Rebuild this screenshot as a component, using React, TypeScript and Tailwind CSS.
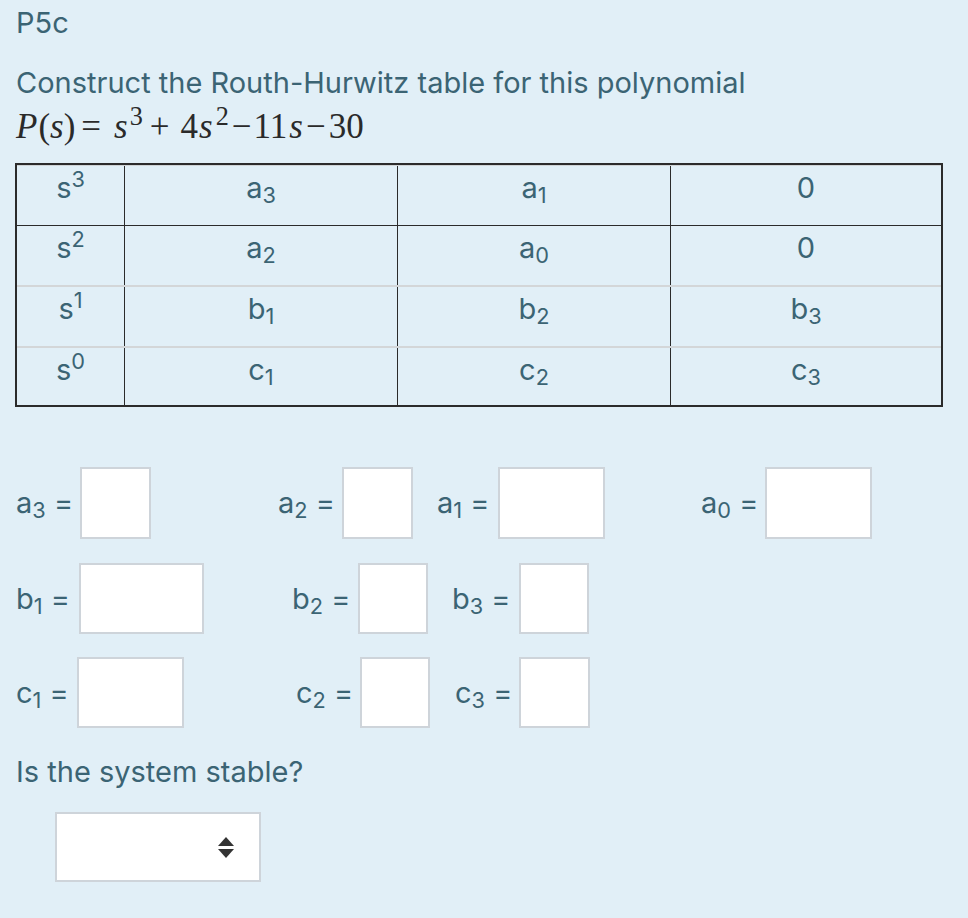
import React from "react";

const FONT = { fontFamily: "Inter, 'Liberation Sans', sans-serif" };

function Sym({ c, n, sup }: { c: string; n: string; sup?: boolean }) {
  return (
    <span>
      {c}
      {sup ? <sup>{n}</sup> : <sub>{n}</sub>}
    </span>
  );
}

type Cell = { c: string; n?: string; sup?: boolean };

const rows: { cells: Cell[]; rowCls: string }[] = [
  {
    rowCls: "h-[60px] border-t border-t-[#cfd3d5]",
    cells: [{ c: "s", n: "3", sup: true }, { c: "a", n: "3" }, { c: "a", n: "1" }, { c: "0" }],
  },
  {
    rowCls: "h-[60px] border-t border-t-[#2b2b2b]",
    cells: [{ c: "s", n: "2", sup: true }, { c: "a", n: "2" }, { c: "a", n: "0" }, { c: "0" }],
  },
  {
    rowCls: "h-[61px] border-t-2 border-t-[#d3d6d8]",
    cells: [{ c: "s", n: "1", sup: true }, { c: "b", n: "1" }, { c: "b", n: "2" }, { c: "b", n: "3" }],
  },
  {
    rowCls: "h-[59px] border-t-2 border-t-[#d3d6d8]",
    cells: [{ c: "s", n: "0", sup: true }, { c: "c", n: "1" }, { c: "c", n: "2" }, { c: "c", n: "3" }],
  },
];

const colCls = [
  "w-[107px]",
  "w-[273px] border-l border-l-[#2b2b2b]",
  "w-[273px] border-l border-l-[#2b2b2b]",
  "w-[271px] border-l border-l-[#2b2b2b]",
];

type Field = { c: string; n: string; ml: string; lw: string; bw: string };

const eqRows: { mt: string; h: string; fields: Field[] }[] = [
  {
    mt: "mt-[60px]",
    h: "h-[72px]",
    fields: [
      { c: "a", n: "3", ml: "ml-0", lw: "w-[64px]", bw: "w-[71px]" },
      { c: "a", n: "2", ml: "ml-[127px]", lw: "w-[64px]", bw: "w-[71px]" },
      { c: "a", n: "1", ml: "ml-[24px]", lw: "w-[61px]", bw: "w-[107px]" },
      { c: "a", n: "0", ml: "ml-[96px]", lw: "w-[64px]", bw: "w-[107px]" },
    ],
  },
  {
    mt: "mt-[24px]",
    h: "h-[71px]",
    fields: [
      { c: "b", n: "1", ml: "ml-0", lw: "w-[63px]", bw: "w-[125px]" },
      { c: "b", n: "2", ml: "ml-[88px]", lw: "w-[66px]", bw: "w-[70px]" },
      { c: "b", n: "3", ml: "ml-[24px]", lw: "w-[67px]", bw: "w-[70px]" },
    ],
  },
  {
    mt: "mt-[23px]",
    h: "h-[71px]",
    fields: [
      { c: "c", n: "1", ml: "ml-0", lw: "w-[61px]", bw: "w-[107px]" },
      { c: "c", n: "2", ml: "ml-[112px]", lw: "w-[64px]", bw: "w-[70px]" },
      { c: "c", n: "3", ml: "ml-[25px]", lw: "w-[64px]", bw: "w-[71px]" },
    ],
  },
];

export default function App() {
  return (
    <div
      className="min-h-[918px] w-[968px] bg-[#e1eff7] text-[#3b6474] text-[29px] leading-[34px] px-[16px] pt-[6px]"
      style={FONT}
    >
      <p>P5c</p>
      <p className="mt-[26px]">Construct the Routh-Hurwitz table for this polynomial</p>
      <div
        className="mt-[8px] h-[37px] text-[35px] leading-[37px] text-[#2a2a2a] whitespace-nowrap"
        style={{ fontFamily: "'Liberation Serif', 'DejaVu Serif', serif" }}
      >
        <span className="italic">P</span>
        <span className="ml-[1px]">(</span>
        <span className="italic">s</span>
        <span>)</span>
        <span className="ml-[6px] mr-[13px]">=</span>
        <span className="italic">s</span>
        <sup className="ml-[2px]">3</sup>
        <span className="ml-[7px] mr-[11px]">+</span>
        <span>4</span>
        <span className="italic ml-[1px]">s</span>
        <sup className="ml-[3px]">2</sup>
        <span className="ml-[3px] mr-[2px]">−</span>
        <span>11</span>
        <span className="italic ml-[2px]">s</span>
        <span className="ml-[3px] mr-[3px]">−</span>
        <span>30</span>
      </div>

      <div className="mt-[18px] -ml-[1px] w-[928px] border-2 border-[#2b2b2b]">
        {rows.map((r, i) => (
          <div key={i} className={"flex " + r.rowCls}>
            {r.cells.map((cell, j) => (
              <div key={j} className={"flex justify-center pt-[5px] " + colCls[j]}>
                {cell.n ? <Sym c={cell.c} n={cell.n} sup={cell.sup} /> : <span>{cell.c}</span>}
              </div>
            ))}
          </div>
        ))}
      </div>

      {eqRows.map((row, i) => (
        <div key={i} className={"flex items-center " + row.mt}>
          {row.fields.map((f, j) => (
            <div key={j} className={"flex items-center " + f.ml}>
              <span className={"whitespace-nowrap " + f.lw}>
                <Sym c={f.c} n={f.n} /> =
              </span>
              <div className={"bg-white border-2 border-[#ced4da] " + f.bw + " " + row.h} />
            </div>
          ))}
        </div>
      ))}

      <p className="mt-[27px]">Is the system stable?</p>
      <div className="mt-[23px] ml-[39px] w-[206px] h-[70px] bg-white border-2 border-[#ced4da] flex items-center justify-end pr-[25px]">
        <svg width="16" height="21" viewBox="0 0 16 21">
          <path d="M8 0 L16 9 L0 9 Z" fill="#333" />
          <path d="M0 12 L16 12 L8 21 Z" fill="#333" />
        </svg>
      </div>
    </div>
  );
}
